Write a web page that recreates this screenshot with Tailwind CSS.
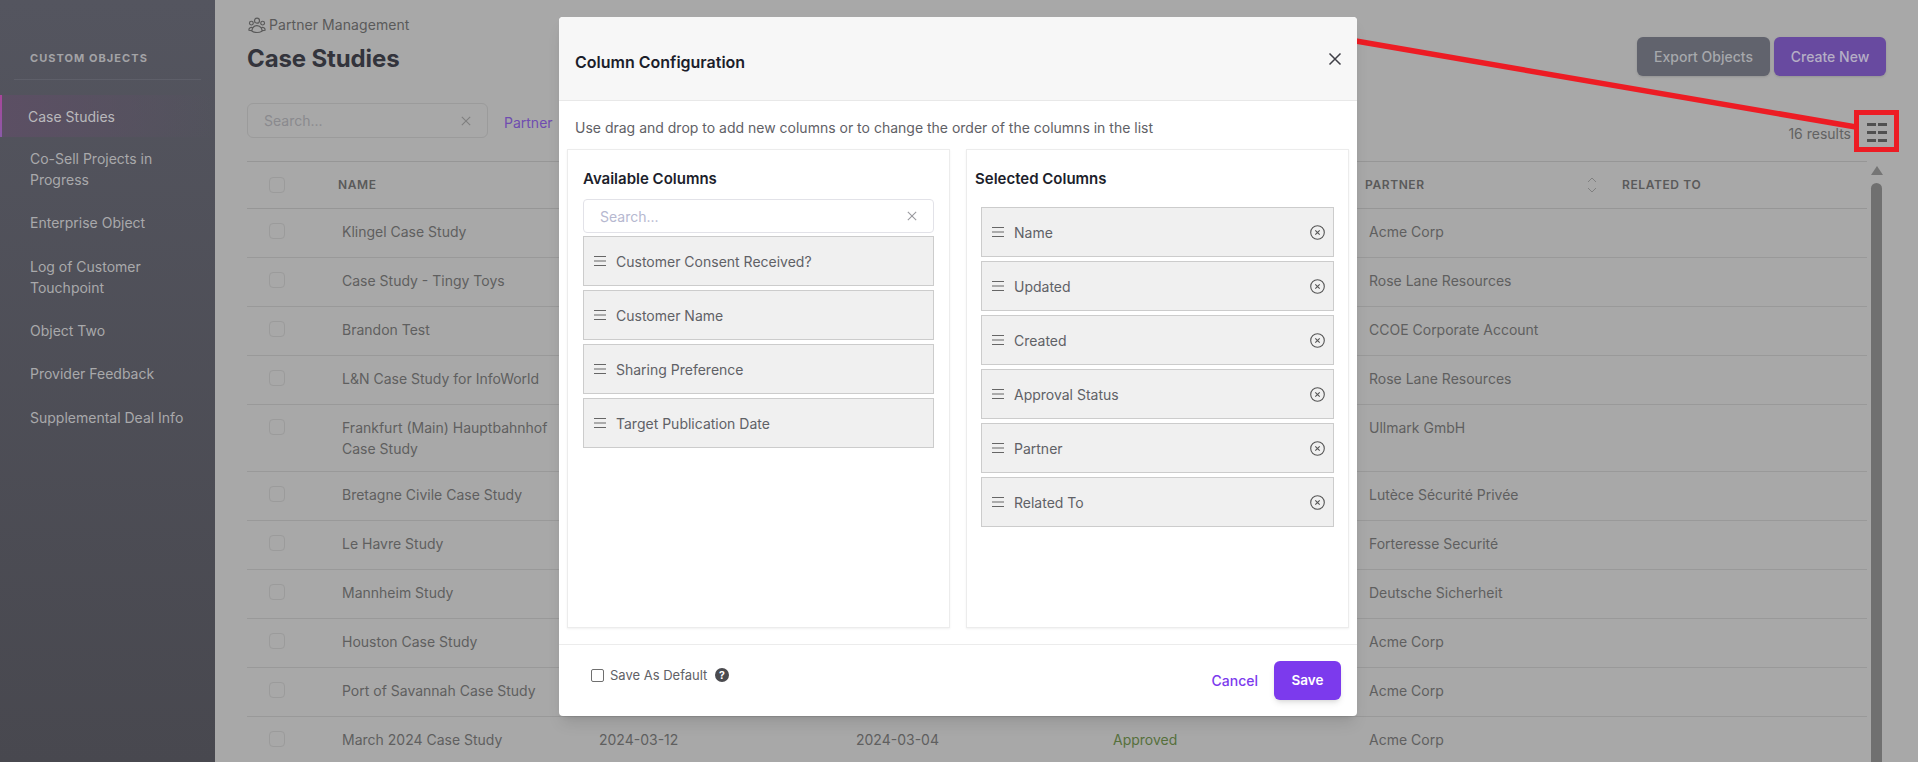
<!DOCTYPE html>
<html lang="en">
<head>
<meta charset="utf-8">
<title>Case Studies</title>
<script src="https://cdn.jsdelivr.net/npm/@tailwindcss/browser@4"></script>
</head>
<body class="font-['Inter',sans-serif] text-sm leading-[21px] bg-[#a8a8a8] overflow-hidden">
<div class="relative flex w-[1918px] h-[762px] overflow-hidden">

  <!-- Sidebar -->
  <aside class="w-[215px] shrink-0 h-full bg-linear-to-b from-[#54555f] to-[#48484f] text-[#a9a9ab]">
    <div class="mx-[14px] h-[80px] pt-[50px] pl-4 border-b border-[#5e5f69] text-[11px] leading-4 font-bold tracking-[0.095em] text-[#a3a3a6]">CUSTOM OBJECTS</div>
    <nav class="mt-[15px] flex flex-col">
      <a class="h-[42px] flex items-center bg-linear-to-r from-[#5c4f64] to-transparent text-[#b9b9bc]">
        <span class="w-[2px] h-full bg-linear-to-b from-[#a8459a] to-[#8a5aa8]"></span>
        <span class="pl-[26px]">Case Studies</span>
      </a>
      <a class="mt-[11px] pl-[30px] pr-4 w-[190px]">Co-Sell Projects in Progress</a>
      <a class="mt-[22px] pl-[30px] pr-4">Enterprise Object</a>
      <a class="mt-[23px] pl-[30px] pr-4 w-[170px]">Log of Customer Touchpoint</a>
      <a class="mt-[22px] pl-[30px] pr-4">Object Two</a>
      <a class="mt-[22px] pl-[30px] pr-4">Provider Feedback</a>
      <a class="mt-[23px] pl-[30px] pr-4">Supplemental Deal Info</a>
    </nav>
  </aside>

  <!-- Main -->
  <main class="flex-1 min-w-0 pl-[32px] text-[#5f5f5f]">
    <div class="flex justify-between h-[103px]">
      <div class="pt-[14px]">
        <div class="flex items-center h-[21px] gap-[2px] text-[#5a5a5a] tracking-[0.005em]">
          <svg class="w-[20px] h-[20px]" viewBox="0 0 24 24" fill="none" stroke="currentColor" stroke-width="1.4" stroke-linecap="round" stroke-linejoin="round"><path d="M18 18.72a9.094 9.094 0 0 0 3.741-.479 3 3 0 0 0-4.682-2.72m.94 3.198.001.031c0 .225-.012.447-.037.666A11.944 11.944 0 0 1 12 21c-2.17 0-4.207-.576-5.963-1.584A6.062 6.062 0 0 1 6 18.719m12 0a5.971 5.971 0 0 0-.941-3.197m0 0A5.995 5.995 0 0 0 12 12.75a5.995 5.995 0 0 0-5.058 2.772m0 0a3 3 0 0 0-4.681 2.72 8.986 8.986 0 0 0 3.74.477m.94-3.197a5.971 5.971 0 0 0-.94 3.197M15 6.75a3 3 0 1 1-6 0 3 3 0 0 1 6 0Zm6 3a2.25 2.25 0 1 1-4.5 0 2.25 2.25 0 0 1 4.5 0Zm-13.5 0a2.25 2.25 0 1 1-4.5 0 2.25 2.25 0 0 1 4.5 0Z"/></svg>
          <span>Partner Management</span>
        </div>
        <h1 class="mt-[8px] text-2xl leading-8 font-bold tracking-[-0.005em] text-[#33343c]">Case Studies</h1>
      </div>
      <div class="flex gap-1 pt-[37px] pr-[32px]">
        <button class="h-[39px] w-[133px] rounded-md bg-[#61636d] text-[#a6a8ac] font-medium shadow-sm">Export Objects</button>
        <button class="h-[39px] w-[112px] rounded-md bg-[#684aa0] text-[#b5aec5] font-medium shadow-sm">Create New</button>
      </div>
    </div>

    <div class="flex items-start h-[58px]">
      <div class="flex items-center justify-between w-[241px] h-[35px] pl-[16px] pr-[16px] border border-[#9b9b9b] rounded-md text-[#8a8a8e]">
        <span>Search...</span>
        <svg class="w-[10px] h-[10px]" viewBox="0 0 12 12" fill="none" stroke="#7f7f7f" stroke-width="1.3"><path d="M1 1l10 10M11 1L1 11"/></svg>
      </div>
      <a class="ml-4 mt-[9px] text-[#6f4db0]">Partner</a>
      <div class="ml-auto mr-[67px] mt-[20px] text-[#626262]">16 results</div>
    </div>

    <div class="flex items-start w-[1639px]">
      <table class="table-fixed border-collapse w-[1620px] border-t border-[#969696]">
        <colgroup>
          <col class="w-[83px]"><col class="w-[257px]"><col class="w-[257px]"><col class="w-[257px]"><col class="w-[256px]"><col class="w-[257px]"><col>
        </colgroup>
        <thead class="text-xs uppercase tracking-[0.05em] font-semibold text-[#5a5a5a]">
          <tr class="h-[47px] border-b border-[#969696]">
            <th class="pl-[22px] text-left font-normal"><span class="block w-4 h-4 rounded-[4px] border border-[#9b9b9b]"></span></th>
            <th class="pl-2 text-left font-semibold">Name</th>
            <th class="pl-2 text-left font-semibold">Updated</th>
            <th class="pl-2 text-left font-semibold">Created</th>
            <th class="pl-2 text-left font-semibold">Approval Status</th>
            <th class="pl-2 text-left font-semibold">
              <span class="flex items-center justify-between pr-[17px]">Partner
                <svg class="w-[10px] h-[16px]" viewBox="0 0 10 16" fill="none" stroke="#808080" stroke-width="1"><path d="M1 5l4-4 4 4M1 11l4 4 4-4"/></svg>
              </span>
            </th>
            <th class="pl-2 text-left font-semibold">Related To</th>
          </tr>
        </thead>
        <tbody class="[&>tr]:border-b [&>tr]:border-[#999999] [&>tr]:h-[49px] [&_td]:px-3 [&_td]:py-3 [&_td]:align-top">
          <tr><td class="!pl-[22px] !pr-0"><span class="block w-4 h-4 mt-[2px] rounded-[4px] border border-[#9b9b9b]"></span></td><td>Klingel Case Study</td><td></td><td></td><td></td><td>Acme Corp</td><td></td></tr>
          <tr><td class="!pl-[22px] !pr-0"><span class="block w-4 h-4 mt-[2px] rounded-[4px] border border-[#9b9b9b]"></span></td><td>Case Study - Tingy Toys</td><td></td><td></td><td></td><td>Rose Lane Resources</td><td></td></tr>
          <tr><td class="!pl-[22px] !pr-0"><span class="block w-4 h-4 mt-[2px] rounded-[4px] border border-[#9b9b9b]"></span></td><td>Brandon Test</td><td></td><td></td><td></td><td>CCOE Corporate Account</td><td></td></tr>
          <tr><td class="!pl-[22px] !pr-0"><span class="block w-4 h-4 mt-[2px] rounded-[4px] border border-[#9b9b9b]"></span></td><td>L&amp;N Case Study for InfoWorld</td><td></td><td></td><td></td><td>Rose Lane Resources</td><td></td></tr>
          <tr><td class="!pl-[22px] !pr-0"><span class="block w-4 h-4 mt-[2px] rounded-[4px] border border-[#9b9b9b]"></span></td><td>Frankfurt (Main) Hauptbahnhof Case Study</td><td></td><td></td><td></td><td>Ullmark GmbH</td><td></td></tr>
          <tr><td class="!pl-[22px] !pr-0"><span class="block w-4 h-4 mt-[2px] rounded-[4px] border border-[#9b9b9b]"></span></td><td>Bretagne Civile Case Study</td><td></td><td></td><td></td><td>Lutèce Sécurité Privée</td><td></td></tr>
          <tr><td class="!pl-[22px] !pr-0"><span class="block w-4 h-4 mt-[2px] rounded-[4px] border border-[#9b9b9b]"></span></td><td>Le Havre Study</td><td></td><td></td><td></td><td>Forteresse Securité</td><td></td></tr>
          <tr><td class="!pl-[22px] !pr-0"><span class="block w-4 h-4 mt-[2px] rounded-[4px] border border-[#9b9b9b]"></span></td><td>Mannheim Study</td><td></td><td></td><td></td><td>Deutsche Sicherheit</td><td></td></tr>
          <tr><td class="!pl-[22px] !pr-0"><span class="block w-4 h-4 mt-[2px] rounded-[4px] border border-[#9b9b9b]"></span></td><td>Houston Case Study</td><td></td><td></td><td></td><td>Acme Corp</td><td></td></tr>
          <tr><td class="!pl-[22px] !pr-0"><span class="block w-4 h-4 mt-[2px] rounded-[4px] border border-[#9b9b9b]"></span></td><td>Port of Savannah Case Study</td><td></td><td></td><td></td><td>Acme Corp</td><td></td></tr>
          <tr><td class="!pl-[22px] !pr-0"><span class="block w-4 h-4 mt-[2px] rounded-[4px] border border-[#9b9b9b]"></span></td><td>March 2024 Case Study</td><td>2024-03-12</td><td>2024-03-04</td><td class="text-[#56703c]">Approved</td><td>Acme Corp</td><td></td></tr>
        </tbody>
      </table>
      <!-- Scrollbar -->
      <div class="ml-1 w-[11px] flex flex-col items-center">
        <span class="mt-[5px] w-0 h-0 border-x-[6px] border-x-transparent border-b-[9px] border-b-[#757575]"></span>
        <span class="mt-[8px] w-[11px] h-[600px] rounded-t-full bg-[#707070]"></span>
      </div>
    </div>
  </main>

  <!-- Annotation over the dimmed page -->
  <svg class="absolute left-0 top-0 pointer-events-none" width="1918" height="762" fill="none" stroke="#ed1c24">
    <path d="M1350 40 L1856 127" stroke-width="5.5"/>
    <rect x="1856.5" y="112.5" width="40" height="37" stroke-width="5"/>
  </svg>
  <div class="absolute left-[1867px] top-[123px] grid grid-cols-2 gap-x-[2px] gap-y-[5px] w-[20px]">
    <span class="h-[3px] bg-[#505050]"></span><span class="h-[3px] bg-[#505050]"></span>
    <span class="h-[3px] bg-[#505050]"></span><span class="h-[3px] bg-[#505050]"></span>
    <span class="h-[3px] bg-[#505050]"></span><span class="h-[3px] bg-[#505050]"></span>
  </div>

  <!-- Modal -->
  <div class="absolute left-[559px] top-[17px] w-[798px] h-[699px] flex flex-col bg-white rounded-[4px] overflow-hidden shadow-lg text-[#5f6166]">
    <header class="h-[84px] shrink-0 flex items-center justify-between pl-4 pr-[15px] bg-[#f7f7f7] border-b border-[#e8e8e8]">
      <h2 class="mt-[7px] text-base font-semibold text-[#1c1e2b]">Column Configuration</h2>
      <svg class="w-[14px] h-[14px]" viewBox="0 0 14 14" fill="none" stroke="#3f3f46" stroke-width="1.5"><path d="M1.5 1.5l11 11M12.5 1.5l-11 11"/></svg>
    </header>
    <p class="pl-4 pt-[16px] h-[48px] shrink-0">Use drag and drop to add new columns or to change the order of the columns in the list</p>
    <div class="flex gap-[16px] px-2 h-[479px] shrink-0">
      <section class="w-[383px] border border-[#ececec] shadow-[0_1px_2px_rgba(0,0,0,0.06)] pl-[15px] pr-[15px] pt-[18px]">
        <h3 class="text-[15px] font-semibold text-[#1c1e2b]">Available Columns</h3>
        <div class="mt-[10px] h-[34px] flex items-center justify-between pl-[16px] pr-[16px] border border-[#e2e2e8] rounded-[4px] text-[#b6b8d0]">
          <span>Search...</span>
          <svg class="w-[10px] h-[10px]" viewBox="0 0 12 12" fill="none" stroke="#9a9a9f" stroke-width="1.3"><path d="M1 1l10 10M11 1L1 11"/></svg>
        </div>
        <ul class="mt-[3px] flex flex-col gap-1">
          <li class="h-[50px] flex items-center gap-[10px] pl-[10px] bg-[#f0f0f0] border border-[#cccccc]">
            <svg class="w-3 h-3" viewBox="0 0 12 12" stroke="#666" stroke-width="1.2"><path d="M0 1.5h12M0 6h12M0 10.5h12"/></svg><span>Customer Consent Received?</span></li>
          <li class="h-[50px] flex items-center gap-[10px] pl-[10px] bg-[#f0f0f0] border border-[#cccccc]">
            <svg class="w-3 h-3" viewBox="0 0 12 12" stroke="#666" stroke-width="1.2"><path d="M0 1.5h12M0 6h12M0 10.5h12"/></svg><span>Customer Name</span></li>
          <li class="h-[50px] flex items-center gap-[10px] pl-[10px] bg-[#f0f0f0] border border-[#cccccc]">
            <svg class="w-3 h-3" viewBox="0 0 12 12" stroke="#666" stroke-width="1.2"><path d="M0 1.5h12M0 6h12M0 10.5h12"/></svg><span>Sharing Preference</span></li>
          <li class="h-[50px] flex items-center gap-[10px] pl-[10px] bg-[#f0f0f0] border border-[#cccccc]">
            <svg class="w-3 h-3" viewBox="0 0 12 12" stroke="#666" stroke-width="1.2"><path d="M0 1.5h12M0 6h12M0 10.5h12"/></svg><span>Target Publication Date</span></li>
        </ul>
      </section>
      <section class="w-[383px] border border-[#ececec] shadow-[0_1px_2px_rgba(0,0,0,0.06)] pl-2 pt-[18px]">
        <h3 class="text-[15px] font-semibold text-[#1c1e2b]">Selected Columns</h3>
        <ul class="mt-[18px] ml-1.5 w-[353px] flex flex-col gap-1">
          <li class="h-[50px] flex items-center gap-[10px] pl-[10px] pr-[8px] bg-[#f0f0f0] border border-[#cccccc]">
            <svg class="w-3 h-3" viewBox="0 0 12 12" stroke="#666" stroke-width="1.2"><path d="M0 1.5h12M0 6h12M0 10.5h12"/></svg><span class="flex-1">Name</span>
            <svg class="w-[15px] h-[15px]" viewBox="0 0 15 15" fill="none" stroke="#555" stroke-width="1.1"><circle cx="7.5" cy="7.5" r="6.8"/><path d="M5.3 5.3l4.4 4.4M9.7 5.3l-4.4 4.4"/></svg></li>
          <li class="h-[50px] flex items-center gap-[10px] pl-[10px] pr-[8px] bg-[#f0f0f0] border border-[#cccccc]">
            <svg class="w-3 h-3" viewBox="0 0 12 12" stroke="#666" stroke-width="1.2"><path d="M0 1.5h12M0 6h12M0 10.5h12"/></svg><span class="flex-1">Updated</span>
            <svg class="w-[15px] h-[15px]" viewBox="0 0 15 15" fill="none" stroke="#555" stroke-width="1.1"><circle cx="7.5" cy="7.5" r="6.8"/><path d="M5.3 5.3l4.4 4.4M9.7 5.3l-4.4 4.4"/></svg></li>
          <li class="h-[50px] flex items-center gap-[10px] pl-[10px] pr-[8px] bg-[#f0f0f0] border border-[#cccccc]">
            <svg class="w-3 h-3" viewBox="0 0 12 12" stroke="#666" stroke-width="1.2"><path d="M0 1.5h12M0 6h12M0 10.5h12"/></svg><span class="flex-1">Created</span>
            <svg class="w-[15px] h-[15px]" viewBox="0 0 15 15" fill="none" stroke="#555" stroke-width="1.1"><circle cx="7.5" cy="7.5" r="6.8"/><path d="M5.3 5.3l4.4 4.4M9.7 5.3l-4.4 4.4"/></svg></li>
          <li class="h-[50px] flex items-center gap-[10px] pl-[10px] pr-[8px] bg-[#f0f0f0] border border-[#cccccc]">
            <svg class="w-3 h-3" viewBox="0 0 12 12" stroke="#666" stroke-width="1.2"><path d="M0 1.5h12M0 6h12M0 10.5h12"/></svg><span class="flex-1">Approval Status</span>
            <svg class="w-[15px] h-[15px]" viewBox="0 0 15 15" fill="none" stroke="#555" stroke-width="1.1"><circle cx="7.5" cy="7.5" r="6.8"/><path d="M5.3 5.3l4.4 4.4M9.7 5.3l-4.4 4.4"/></svg></li>
          <li class="h-[50px] flex items-center gap-[10px] pl-[10px] pr-[8px] bg-[#f0f0f0] border border-[#cccccc]">
            <svg class="w-3 h-3" viewBox="0 0 12 12" stroke="#666" stroke-width="1.2"><path d="M0 1.5h12M0 6h12M0 10.5h12"/></svg><span class="flex-1">Partner</span>
            <svg class="w-[15px] h-[15px]" viewBox="0 0 15 15" fill="none" stroke="#555" stroke-width="1.1"><circle cx="7.5" cy="7.5" r="6.8"/><path d="M5.3 5.3l4.4 4.4M9.7 5.3l-4.4 4.4"/></svg></li>
          <li class="h-[50px] flex items-center gap-[10px] pl-[10px] pr-[8px] bg-[#f0f0f0] border border-[#cccccc]">
            <svg class="w-3 h-3" viewBox="0 0 12 12" stroke="#666" stroke-width="1.2"><path d="M0 1.5h12M0 6h12M0 10.5h12"/></svg><span class="flex-1">Related To</span>
            <svg class="w-[15px] h-[15px]" viewBox="0 0 15 15" fill="none" stroke="#555" stroke-width="1.1"><circle cx="7.5" cy="7.5" r="6.8"/><path d="M5.3 5.3l4.4 4.4M9.7 5.3l-4.4 4.4"/></svg></li>
        </ul>
      </section>
    </div>
    <footer class="mt-[16px] flex-1 border-t border-[#ececec] flex items-start pl-[32px] pr-[16px]">
      <div class="flex items-center h-4 mt-[22px] gap-[6px] text-[13px] leading-4">
        <span class="block w-[13px] h-[13px] rounded-[2px] border border-[#6f6f6f]"></span>
        <span>Save As Default</span>
        <svg class="ml-[2px] w-[14px] h-[14px]" viewBox="0 0 14 14"><circle cx="7" cy="7" r="7" fill="#4b4b4f"/><text x="7" y="10.6" text-anchor="middle" font-size="10.5" font-weight="700" fill="#fff" font-family="Inter">?</text></svg>
      </div>
      <a class="ml-auto mt-[26px] mr-4 text-sm font-medium leading-5 text-[#7c3aed]">Cancel</a>
      <button class="mt-[16px] w-[67px] h-[39px] rounded-md bg-[#7c3aed] text-white font-semibold text-[13.5px] shadow-md">Save</button>
    </footer>
  </div>
</div>
</body>
</html>
